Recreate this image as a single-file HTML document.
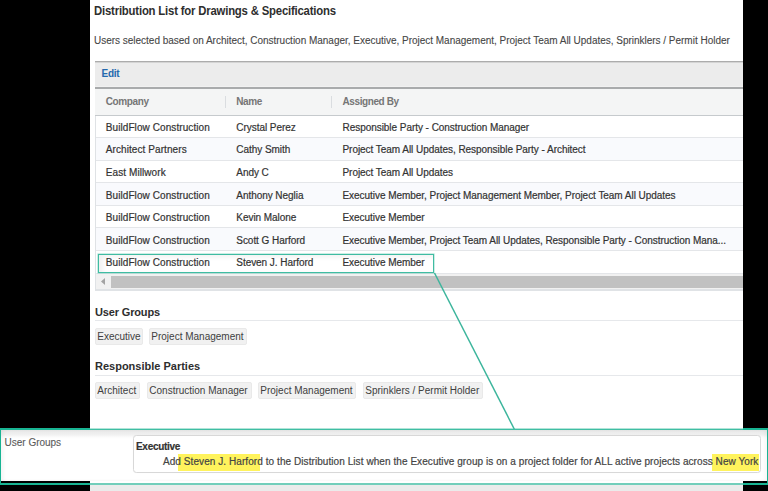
<!DOCTYPE html>
<html><head><meta charset="utf-8">
<style>
html,body{margin:0;padding:0;}
body{width:768px;height:491px;background:#000;overflow:hidden;position:relative;font-family:"Liberation Sans",sans-serif;color:#333;}
.a{position:absolute;white-space:nowrap;}
.b{position:absolute;}
.t{position:absolute;white-space:nowrap;font-size:10px;line-height:10px;-webkit-text-stroke:0.2px currentColor;}
.panel{left:90px;top:0;width:653px;height:491px;background:#fff;}
.title{left:94.2px;top:4.7px;font-size:12px;line-height:12px;font-weight:bold;color:#2e2e2e;letter-spacing:-0.2px;transform:scaleX(0.945);transform-origin:0 0;}
.sub{left:94px;top:36px;color:#464646;letter-spacing:-0.015px;-webkit-text-stroke:0.1px currentColor;}
.edit{left:101.6px;top:68.8px;font-weight:bold;color:#2569ae;-webkit-text-stroke:0px;letter-spacing:-0.3px;}
.ht{top:97px;font-weight:bold;color:#767676;letter-spacing:-0.4px;}
.sep{top:96px;width:1px;height:12px;background:#dadde0;}
.rb{left:95px;width:648px;height:1px;background:#e4e6e9;}
.alt{left:95px;width:648px;background:#f9fafd;}
.c1{left:105.8px;letter-spacing:0.08px}.c2{left:236.3px;letter-spacing:-0.05px}.c3{left:342.5px;letter-spacing:-0.045px}
.t.ht{letter-spacing:-0.4px;-webkit-text-stroke:0px}
.h2{left:95px;font-size:11px;line-height:11px;font-weight:bold;color:#2e2e2e;letter-spacing:-0.15px;}
.hl{left:95px;width:648px;height:1px;background:#e6e8eb;}
.tag{position:absolute;height:17px;box-sizing:border-box;background:#f1f1f1;border:1px solid #e9e9e9;border-radius:2px;}
.tag span{position:absolute;left:1.3px;top:2.6px;font-size:10px;line-height:10px;color:#404040;white-space:nowrap;}
</style></head><body>
<div class="b panel"></div>
<div class="a title">Distribution List for Drawings &amp; Specifications</div>
<div class="t sub">Users selected based on Architect, Construction Manager, Executive, Project Management, Project Team All Updates, Sprinklers / Permit Holder</div>

<!-- table -->
<div class="b" style="left:95px;top:61px;width:648px;height:1px;background:#acacac"></div>
<div class="b" style="left:95px;top:62px;width:648px;height:1px;background:#d4d4d4"></div>
<div class="b" style="left:95px;top:63px;width:648px;height:23px;background:#ececec"></div>
<div class="b" style="left:95px;top:86px;width:648px;height:1px;background:#f1f1f1"></div>
<div class="b" style="left:95px;top:87px;width:648px;height:2px;background:#a9abac"></div>
<div class="t edit">Edit</div>
<div class="b" style="left:95px;top:89px;width:648px;height:26px;background:#f4f5f5"></div>
<div class="b" style="left:95px;top:115px;width:648px;height:1px;background:#c6cacd"></div>
<div class="t ht c1">Company</div>
<div class="b sep" style="left:225px"></div>
<div class="t ht c2">Name</div>
<div class="b sep" style="left:331px"></div>
<div class="t ht c3">Assigned By</div>

<div class="b alt" style="top:138px;height:22px"></div>
<div class="b alt" style="top:183px;height:22px"></div>
<div class="b alt" style="top:228px;height:22px"></div>
<div class="b rb" style="top:137px"></div>
<div class="b rb" style="top:160px"></div>
<div class="b rb" style="top:182px"></div>
<div class="b rb" style="top:205px"></div>
<div class="b rb" style="top:227px"></div>
<div class="b rb" style="top:250px"></div>
<div class="b rb" style="top:273px"></div>

<div class="t c1" style="top:122.5px">BuildFlow Construction</div><div class="t c2" style="top:122.5px">Crystal Perez</div><div class="t c3" style="top:122.5px">Responsible Party - Construction Manager</div>
<div class="t c1" style="top:145px">Architect Partners</div><div class="t c2" style="top:145px">Cathy Smith</div><div class="t c3" style="top:145px">Project Team All Updates, Responsible Party - Architect</div>
<div class="t c1" style="top:168px">East Millwork</div><div class="t c2" style="top:168px">Andy C</div><div class="t c3" style="top:168px">Project Team All Updates</div>
<div class="t c1" style="top:191px">BuildFlow Construction</div><div class="t c2" style="top:191px">Anthony Neglia</div><div class="t c3" style="top:191px">Executive Member, Project Management Member, Project Team All Updates</div>
<div class="t c1" style="top:213px">BuildFlow Construction</div><div class="t c2" style="top:213px">Kevin Malone</div><div class="t c3" style="top:213px">Executive Member</div>
<div class="t c1" style="top:235.5px">BuildFlow Construction</div><div class="t c2" style="top:235.5px">Scott G Harford</div><div class="t c3" style="top:235.5px">Executive Member, Project Team All Updates, Responsible Party - Construction Mana...</div>
<div class="t c1" style="top:258px">BuildFlow Construction</div><div class="t c2" style="top:258px">Steven J. Harford</div><div class="t c3" style="top:258px">Executive Member</div>

<!-- scrollbar -->
<div class="b" style="left:95px;top:274px;width:648px;height:15px;background:#f1f1f1"></div>
<div class="b" style="left:111px;top:276px;width:632px;height:12px;background:#c1c1c1"></div>
<svg class="b" style="left:100px;top:277px" width="7" height="10"><polygon points="1,4.5 5,1 5,8" fill="#a3a3a3"/></svg>
<div class="b" style="left:95px;top:289px;width:648px;height:2px;background:#e0e3e6"></div>
<div class="b" style="left:95px;top:116px;width:1px;height:174px;background:#dfe2e5"></div>

<!-- groups -->
<div class="a h2" style="top:306.7px">User Groups</div>
<div class="b hl" style="top:320px"></div>
<div class="tag" style="left:95px;top:328px;width:48px"><span>Executive</span></div>
<div class="tag" style="left:149px;top:328px;width:98px"><span>Project Management</span></div>
<div class="a h2" style="top:361px;letter-spacing:0px">Responsible Parties</div>
<div class="b hl" style="top:375px"></div>
<div class="tag" style="left:95px;top:382px;width:45px"><span>Architect</span></div>
<div class="tag" style="left:147px;top:382px;width:105px"><span>Construction Manager</span></div>
<div class="tag" style="left:258px;top:382px;width:98px"><span>Project Management</span></div>
<div class="tag" style="left:363px;top:382px;width:120px"><span>Sprinklers / Permit Holder</span></div>

<!-- highlight -->
<div class="b" style="left:98px;top:254px;width:336px;height:19px;box-sizing:border-box;border:1.5px solid #40bca2;box-shadow:0 0 0 0.6px rgba(64,188,162,0.45),inset 4px 2px 5px rgba(0,0,0,0.06)"></div>
<svg class="b" style="left:0;top:0" width="768" height="491"><line x1="434.5" y1="273" x2="514.5" y2="429.5" stroke="#3cb59c" stroke-width="1.5"/></svg>

<!-- callout -->
<div class="b" style="left:90px;top:485px;width:653px;height:6px;background:#ebebeb"></div>
<div class="b" style="left:0;top:429px;width:768px;height:56px;box-sizing:border-box;border-style:solid;border-color:#3fbea3 #18b493 #72cebb #18b493;border-width:1px 1px 2px 1px;box-shadow:0 -1px 0 rgba(59,189,159,0.4)"></div>
<div class="b" style="left:0;top:428px;width:90px;height:2px;background:#18b493"></div>
<div class="b" style="left:743px;top:428px;width:25px;height:2px;background:#18b493"></div>
<div class="b" style="left:0;top:483px;width:90px;height:2px;background:#18b493"></div>
<div class="b" style="left:743px;top:483px;width:25px;height:2px;background:#18b493"></div>
<div class="b" style="left:1px;top:430px;width:766px;height:51px;background:linear-gradient(#e9e9e9 0px,#ededed 3px,#f2f2f2 5px,#fbfbfb 7px,#fff 9px);box-shadow:inset 3px 0 4px -1px rgba(0,0,0,0.05),inset -3px 0 4px -1px rgba(0,0,0,0.04)"></div>
<div class="t" style="left:4.6px;top:437.6px;color:#5a5a5a;letter-spacing:-0.02px;-webkit-text-stroke:0.1px currentColor">User Groups</div>
<div class="b" style="left:133px;top:435px;width:628px;height:38px;box-sizing:border-box;border:1px solid #d8d8d8;border-radius:3.5px;background:#fff;box-shadow:0 0 1px rgba(0,0,0,0.05)"></div>
<div class="b" style="left:178px;top:454px;width:82px;height:17px;background:#fff35c"></div>
<div class="b" style="left:712px;top:454px;width:47px;height:17px;background:#fff35c"></div>
<div class="t" style="left:136px;top:441.5px;font-weight:bold;color:#333;letter-spacing:-0.3px">Executive</div>
<div class="t" style="left:163px;top:457px;color:#444;letter-spacing:0.07px">Add Steven J. Harford to the Distribution List when the Executive group is on a project folder for ALL active projects across New York</div>
</body></html>
